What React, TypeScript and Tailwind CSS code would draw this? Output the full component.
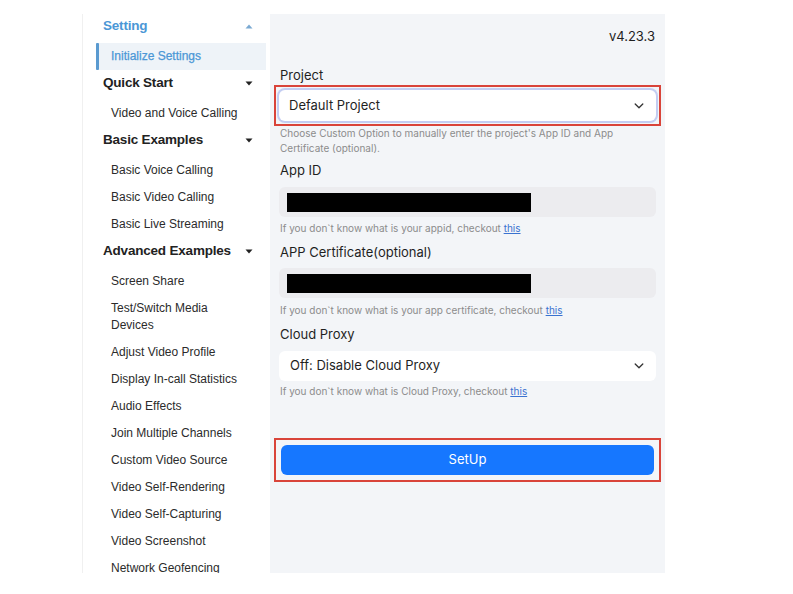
import React from "react";

type NavItem = { label: React.ReactNode; active?: boolean };
type NavGroup = { title: string; open?: boolean; items: NavItem[] };

const groups: NavGroup[] = [
  { title: "Setting", open: true, items: [{ label: "Initialize Settings", active: true }] },
  { title: "Quick Start", items: [{ label: "Video and Voice Calling" }] },
  {
    title: "Basic Examples",
    items: [
      { label: "Basic Voice Calling" },
      { label: "Basic Video Calling" },
      { label: "Basic Live Streaming" },
    ],
  },
  {
    title: "Advanced Examples",
    items: [
      { label: "Screen Share" },
      { label: <>Test/Switch Media<br />Devices</> },
      { label: "Adjust Video Profile" },
      { label: "Display In-call Statistics" },
      { label: "Audio Effects" },
      { label: "Join Multiple Channels" },
      { label: "Custom Video Source" },
      { label: "Video Self-Rendering" },
      { label: "Video Self-Capturing" },
      { label: "Video Screenshot" },
      { label: "Network Geofencing" },
    ],
  },
];

function Caret({ up, className }: { up?: boolean; className: string }) {
  return (
    <svg width="8" height="5" viewBox="0 0 8 5" className={className}>
      {up ? <path d="M4 0.5 L7.5 4.5 L0.5 4.5 Z" fill="currentColor" /> : <path d="M0.5 0.5 L7.5 0.5 L4 4.5 Z" fill="currentColor" />}
    </svg>
  );
}

function Chevron() {
  return (
    <svg width="10" height="6" viewBox="0 0 10 6" fill="none">
      <path d="M1.2 1 L5 4.8 L8.8 1" stroke="#333" strokeWidth="1.3" strokeLinecap="round" strokeLinejoin="round" />
    </svg>
  );
}

function Sidebar() {
  return (
    <aside
      className="w-[188px] shrink-0 h-full overflow-hidden border-l border-[#f0f0f0] pl-[13px] pr-[4px]"
      style={{ fontFamily: "'Liberation Sans', Arial, sans-serif" }}
    >
      <div className="-mt-[1.5px]">
        {groups.map((g) => (
          <div key={g.title}>
            <div className="h-[27px] mb-[3px] flex items-center justify-between pl-[7px] pr-[13px]">
              <span className={`text-[13.5px] font-bold tracking-[-0.2px] ${g.open ? "text-[#4b97d6]" : "text-[#222]"}`}>{g.title}</span>
              <Caret up={g.open} className={g.open ? "text-[#7aa9d2]" : "text-[#222]"} />
            </div>
            {g.items.map((it, i) =>
              it.active ? (
                <div key={i} className="relative bg-[#eef3f8] py-[5px] pl-[15px] text-[12px] leading-[17px] text-[#4b97d6] [-webkit-text-stroke:0.25px_#4b97d6]">
                  <span className="absolute left-0 top-0 bottom-0 w-[3px] bg-[#5a9ad0] rounded-[1px]" />
                  {it.label}
                </div>
              ) : (
                <div key={i} className="py-[5px] pl-[15px] text-[12px] leading-[17px] text-[#2b2b2b]">
                  {it.label}
                </div>
              )
            )}
          </div>
        ))}
      </div>
    </aside>
  );
}

function Help({ children }: { children: React.ReactNode }) {
  return <p className="text-[10px] leading-[15px] text-[#8c8c8c]">{children}</p>;
}

function Link() {
  return <span className="text-[#3a72d0] underline">this</span>;
}

function Label({ children }: { children: React.ReactNode }) {
  return <div className="text-[13px] leading-[18px] text-[#1f1f1f]">{children}</div>;
}

function Masked() {
  return (
    <div className="h-[30px] rounded-[6px] bg-[#ececef] flex items-center px-[8px]">
      <div className="w-[244px] h-[19px] bg-black" />
    </div>
  );
}

function Panel() {
  return (
    <main className="w-[395px] shrink-0 h-full bg-[#f3f5f8] px-[9px] pt-[13px]">
      <div className="text-right text-[13px] leading-[18px] text-[#1f1f1f] pr-[1px]">v4.23.3</div>

      <div className="mt-[21px] pl-[1px]">
        <Label>Project</Label>
      </div>
      <div className="mt-[1px] -mx-[5px] border-2 border-[#d9443a] p-[3px]">
        <div className="h-[31px] rounded-[6px] bg-white ring-2 ring-[#c3cdf2] flex items-center justify-between pl-[10px] pr-[12px]">
          <span className="text-[13px] text-[#1f1f1f]">Default Project</span>
          <Chevron />
        </div>
      </div>
      <div className="pl-[1px]">
        <Help>
          Choose Custom Option to manually enter the project's App ID and App
          <br />
          Certificate (optional).
        </Help>
      </div>

      <div className="mt-[5px] pl-[1px]">
        <Label>App ID</Label>
      </div>
      <div className="mt-[8px]">
        <Masked />
      </div>
      <div className="mt-[4px] pl-[1px]">
        <Help>
          If you don`t know what is your appid, checkout <Link />
        </Help>
      </div>

      <div className="mt-[7px] pl-[1px]">
        <Label>APP Certificate(optional)</Label>
      </div>
      <div className="mt-[7px]">
        <Masked />
      </div>
      <div className="mt-[5px] pl-[1px]">
        <Help>
          If you don`t know what is your app certificate, checkout <Link />
        </Help>
      </div>

      <div className="mt-[7px] pl-[1px]">
        <Label>Cloud Proxy</Label>
      </div>
      <div className="mt-[8px] h-[30px] rounded-[6px] bg-white flex items-center justify-between pl-[11px] pr-[12px]">
        <span className="text-[13px] text-[#1f1f1f]">Off: Disable Cloud Proxy</span>
        <Chevron />
      </div>
      <div className="mt-[3px] pl-[1px]">
        <Help>
          If you don`t know what is Cloud Proxy, checkout <Link />
        </Help>
      </div>

      <div className="mt-[39px] -mx-[5px] border-2 border-[#d9443a] p-[5px]">
        <button className="w-full h-[30px] rounded-[6px] bg-[#1677ff] text-white text-[13px]">SetUp</button>
      </div>
    </main>
  );
}

export default function App() {
  return (
    <div className="w-[793px] h-[594px] bg-white" style={{ fontFamily: "Inter, 'Liberation Sans', sans-serif" }}>
      <div className="pt-[14px] pl-[82px] flex h-[573px]">
        <Sidebar />
        <Panel />
      </div>
    </div>
  );
}
